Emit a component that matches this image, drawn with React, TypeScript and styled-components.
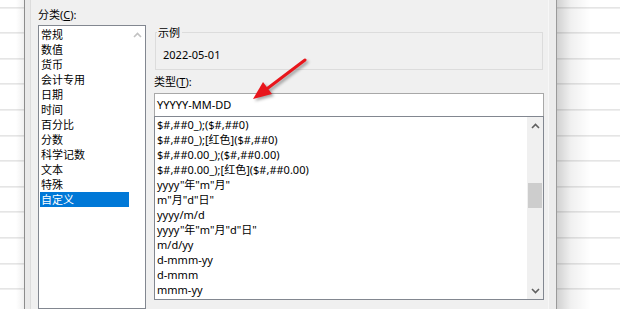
import styled, { createGlobalStyle } from 'styled-components';

const GlobalStyle = createGlobalStyle`
  html, body {
    margin: 0;
    padding: 0;
    background: #ffffff;
    overflow: hidden;
  }
  * {
    box-sizing: border-box;
  }
`;

const uiFont = `"Noto Sans", "Noto Sans CJK SC", sans-serif`;

const Page = styled.div`
  position: relative;
  display: flex;
  width: 620px;
  height: 309px;
  overflow: hidden;
  font-family: ${uiFont};
  font-size: 11px;
  color: #000000;
`;

const Sheet = styled.div<{ $side: 'left' | 'right' }>`
  flex: ${(p) => (p.$side === 'left' ? '0 0 24px' : '1 1 auto')};
  background-color: #ffffff;
  background-image: ${(p) =>
      p.$side === 'right'
        ? 'linear-gradient(to right, rgba(0, 0, 0, 0.18), rgba(0, 0, 0, 0.06) 14px, rgba(0, 0, 0, 0) 34px),'
        : 'linear-gradient(to right, rgba(0, 0, 0, 0) 16px, rgba(0, 0, 0, 0.06)),'}
    repeating-linear-gradient(
      to bottom,
      transparent 0,
      transparent 24.6px,
      #d4d4d4 24.6px,
      #d4d4d4 25.6px
    );
  background-position: 0 0, 0 -17.6px;
`;

const Dialog = styled.div`
  flex: 0 0 533px;
  display: flex;
  gap: 8px;
  padding: 0 12px 0 13px;
  background: #f0f0f0;
  border-left: 1px solid #8c8c8c;
  border-right: 1px solid #9a9a9a;
  box-shadow: inset 5px 0 0 #e9e9e9, inset 6px 0 0 #dcdcdc,
    inset -7px 0 0 #ececec, inset -8px 0 0 #f7f7f7;
`;

const CategoryColumn = styled.div`
  flex: 0 0 108px;
  display: flex;
  flex-direction: column;
`;

const Label = styled.div<{ $above: number; $below: number }>`
  line-height: 16px;
  padding-top: ${(p) => p.$above}px;
  margin-bottom: ${(p) => p.$below}px;
  white-space: nowrap;
`;

const ListBox = styled.div<{ $height?: number }>`
  display: flex;
  background: #ffffff;
  border: 1px solid #828790;
  ${(p) => (p.$height ? `height: ${p.$height}px;` : 'flex: 1 1 auto; height: 320px;')}
`;

const Items = styled.div<{ $top?: number }>`
  flex: 1 1 auto;
  display: flex;
  flex-direction: column;
  padding-top: ${(p) => p.$top ?? 0}px;
  overflow: hidden;
`;

const Item = styled.div<{ $selected?: boolean }>`
  height: 15px;
  line-height: 15px;
  margin: 0 0 0 1px;
  padding-left: 1px;
  white-space: nowrap;
  background: ${(p) => (p.$selected ? '#0078d7' : 'transparent')};
  color: ${(p) => (p.$selected ? '#ffffff' : '#000000')};
`;

const ScrollBar = styled.div<{ $disabled?: boolean }>`
  flex: 0 0 16px;
  display: flex;
  flex-direction: column;
  background: ${(p) => (p.$disabled ? '#ffffff' : '#f0f0f0')};
`;

const ScrollArrow = styled.div`
  flex: 0 0 17px;
  display: flex;
  align-items: center;
  justify-content: center;
`;

const Track = styled.div`
  flex: 1 1 auto;
  display: flex;
  flex-direction: column;
`;

const Thumb = styled.div<{ $offset: number }>`
  height: 25px;
  margin: ${(p) => p.$offset}px 1px 0 1px;
  background: #cdcdcd;
`;

const TypeColumn = styled.div`
  flex: 0 0 390px;
  display: flex;
  flex-direction: column;
  padding-top: 32px;
`;

const Group = styled.div`
  margin: 0 1px 0 1px;
  padding: 0 7px 6px 7px;
  border: 1px solid #dcdcdc;
`;

const Caption = styled.div`
  width: fit-content;
  margin: -8px 0 6px -6px;
  padding: 0 2px 0 1px;
  line-height: 16px;
  background: #f0f0f0;
`;

const SampleValue = styled.div`
  line-height: 16px;
`;

const TypeInput = styled.div`
  height: 23px;
  padding: 0 2px;
  line-height: 22px;
  background: #ffffff;
  border: 1px solid #a8a8a8;
  border-bottom: none;
  white-space: nowrap;
`;

const FormatItem = styled.div`
  height: 15px;
  line-height: 15px;
  padding-left: 2px;
  white-space: nowrap;
`;

const Overlay = styled.svg`
  position: absolute;
  left: 0;
  top: 0;
  pointer-events: none;
  filter: drop-shadow(2px 2px 1.5px rgba(0, 0, 0, 0.35));
`;

const Chevron = ({ up, color }: { up?: boolean; color: string }) => (
  <svg width="9" height="6" viewBox="0 0 9 6">
    <path
      d={up ? 'M1 5 L4.5 1.5 L8 5' : 'M1 1 L4.5 4.5 L8 1'}
      fill="none"
      stroke={color}
      strokeWidth="1.6"
    />
  </svg>
);

const categories = [
  '常规',
  '数值',
  '货币',
  '会计专用',
  '日期',
  '时间',
  '百分比',
  '分数',
  '科学记数',
  '文本',
  '特殊',
  '自定义',
];

const formats = [
  '$#,##0_);($#,##0)',
  '$#,##0_);[红色]($#,##0)',
  '$#,##0.00_);($#,##0.00)',
  '$#,##0.00_);[红色]($#,##0.00)',
  'yyyy"年"m"月"',
  'm"月"d"日"',
  'yyyy/m/d',
  'yyyy"年"m"月"d"日"',
  'm/d/yy',
  'd-mmm-yy',
  'd-mmm',
  'mmm-yy',
];

export default function App() {
  return (
    <>
      <GlobalStyle />
      <Page>
        <Sheet $side="left" />
        <Dialog>
          <CategoryColumn>
            <Label $above={7} $below={2}>
              分类(<u>C</u>):
            </Label>
            <ListBox>
              <Items $top={1}>
                {categories.map((name) => (
                  <Item key={name} $selected={name === '自定义'}>
                    {name}
                  </Item>
                ))}
              </Items>
              <ScrollBar $disabled>
                <ScrollArrow>
                  <Chevron up color="#c2c2c2" />
                </ScrollArrow>
              </ScrollBar>
            </ListBox>
          </CategoryColumn>
          <TypeColumn>
            <Group>
              <Caption>示例</Caption>
              <SampleValue>2022-05-01</SampleValue>
            </Group>
            <Label $above={4} $below={3}>
              类型(<u>T</u>):
            </Label>
            <TypeInput>YYYYY-MM-DD</TypeInput>
            <ListBox $height={184}>
              <Items>
                {formats.map((f) => (
                  <FormatItem key={f}>{f}</FormatItem>
                ))}
              </Items>
              <ScrollBar>
                <ScrollArrow>
                  <Chevron up color="#606060" />
                </ScrollArrow>
                <Track>
                  <Thumb $offset={49} />
                </Track>
                <ScrollArrow>
                  <Chevron color="#606060" />
                </ScrollArrow>
              </ScrollBar>
            </ListBox>
          </TypeColumn>
        </Dialog>
        <Sheet $side="right" />
        <Overlay width="620" height="309" viewBox="0 0 620 309">
          <line x1="305" y1="60" x2="268" y2="88" stroke="#e8161c" strokeWidth="3" strokeLinecap="round" />
          <polygon points="253,99 272,94 263,82" fill="#e8161c" />
        </Overlay>
      </Page>
    </>
  );
}
